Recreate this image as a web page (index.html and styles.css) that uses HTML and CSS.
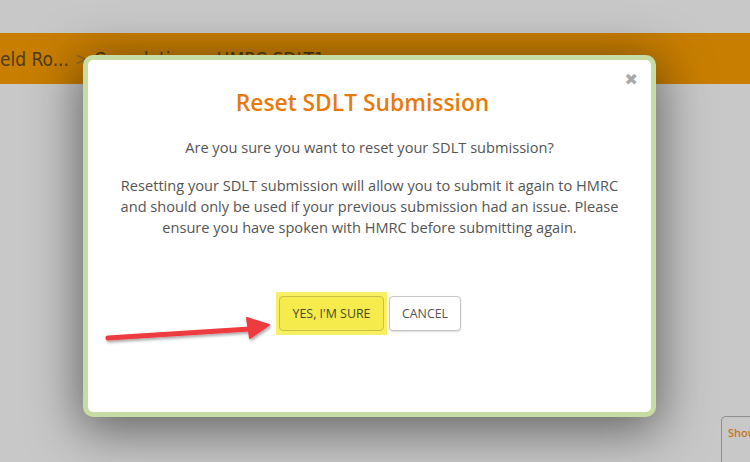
FILE: index.html
```html
<!DOCTYPE html>
<html>
<head>
<meta charset="utf-8">
<link rel="stylesheet" href="styles.css">
</head>
<body>
<div class="page">
  <div class="topgap"></div>
  <div class="crumbs">
    <span class="crumb first">eld Ro...</span>
    <span class="sep">&gt;</span>
    <span class="crumb">Completion</span>
    <span class="sep">&gt;</span>
    <span class="crumb">HMRC SDLT1</span>
  </div>
  <div class="content">
    <div class="show-box"><span class="show">Show</span></div>
  </div>
</div>

<div class="modal">
  <div class="modal-inner">
    <span class="close">&#x2716;</span>
    <h1 class="title">Reset SDLT Submission</h1>
    <p class="question">Are you sure you want to reset your SDLT submission?</p>
    <p class="info">Resetting your SDLT submission will allow you to submit it again to HMRC<br>and should only be used if your previous submission had an issue. Please<br>ensure you have spoken with HMRC before submitting again.</p>
    <div class="actions">
      <span class="highlight"><button class="btn btn-yes">YES, I'M SURE</button></span>
      <button class="btn btn-cancel">CANCEL</button>
    </div>
  </div>
</div>

<svg class="arrow" width="190" height="50" viewBox="0 0 190 50">
  <defs>
    <filter id="sh" x="-20%" y="-50%" width="140%" height="200%">
      <feDropShadow dx="1" dy="2" stdDeviation="1.5" flood-color="#000" flood-opacity="0.35"/>
    </filter>
  </defs>
  <g filter="url(#sh)">
    <line x1="10" y1="34" x2="152" y2="25" stroke="#ee3b40" stroke-width="5" stroke-linecap="round"/>
    <polygon points="149,14 171,21 152,34" fill="#ee3b40" stroke="#ee3b40" stroke-width="2" stroke-linejoin="round"/>
  </g>
</svg>
</body>
</html>
```

FILE: styles.css
```css
html, body {
  margin: 0;
  padding: 0;
}
body {
  width: 750px;
  height: 462px;
  overflow: hidden;
  background: #c8c8c8;
  font-family: "Open Sans", "DejaVu Sans", sans-serif;
  position: relative;
}
.page {
  display: flex;
  flex-direction: column;
  height: 462px;
}
.topgap {
  height: 33px;
}
.crumbs {
  height: 51px;
  background: #c87e00;
  display: flex;
  align-items: center;
  gap: 6px;
  font-family: "DejaVu Sans", sans-serif;
  font-stretch: condensed;
  font-size: 19px;
  color: #4f3d12;
  white-space: nowrap;
  overflow: hidden;
}
.crumb.first {
  margin-left: 0;
}
.sep {
  color: #8a6a30;
  font-size: 17px;
}
.content {
  flex: 1;
  display: flex;
  justify-content: flex-end;
  align-items: flex-end;
}
.show-box {
  width: 29px;
  height: 46px;
  border: 1px solid #8e8e8e;
  border-right: none;
  border-bottom: none;
  border-radius: 5px 0 0 0;
  padding: 6px 0 0 6px;
  box-sizing: border-box;
  overflow: hidden;
  line-height: 16px;
}
.show {
  font-size: 11px;
  font-weight: 600;
  color: #c9731a;
}

.modal {
  position: absolute;
  left: 83px;
  top: 55px;
  width: 573px;
  height: 362px;
  box-sizing: border-box;
  border: 5px solid #c7dca2;
  border-radius: 10px;
  background: #fff;
  box-shadow: 0 10px 50px 4px rgba(0, 0, 0, 0.5);
}
.modal-inner {
  position: relative;
  padding: 28px 20px 0;
  text-align: center;
  height: 100%;
  box-sizing: border-box;
  border-radius: 6px;
}
.close {
  position: absolute;
  right: 13px;
  top: 10px;
  font-size: 16px;
  color: #a9a9a9;
  font-family: "DejaVu Sans", sans-serif;
  font-weight: bold;
}
.title {
  margin: 0;
  font-size: 22.8px;
  line-height: 30px;
  font-weight: 600;
  color: #e87a0c;
  padding-right: 14px;
}
.question {
  margin: 19px 0 0;
  font-size: 14.6px;
  line-height: 21px;
  color: #555;
}
.info {
  margin: 17px 0 0;
  font-size: 14.6px;
  line-height: 21px;
  color: #555;
}
.actions {
  margin-top: 54px;
  display: flex;
  justify-content: center;
  align-items: center;
  gap: 2px;
  padding-right: 2px;
}
.highlight {
  display: flex;
  background: #f8ef62;
  padding: 4px 3px;
}
.btn {
  font-family: "Open Sans", sans-serif;
  font-size: 12.4px;
  color: #555;
  height: 35px;
  border-radius: 4px;
  padding: 0 8px;
  cursor: pointer;
}
.btn-yes {
  width: 105px;
  background: #f5eb4c;
  border: 1px solid #c9c048;
  color: #4a4a2a;
}
.btn-cancel {
  width: 72px;
  background: #fff;
  border: 1px solid #c4c4c4;
  box-shadow: 0 1px 2px rgba(0,0,0,0.15);
}
.arrow {
  position: absolute;
  left: 98px;
  top: 304px;
}
```
